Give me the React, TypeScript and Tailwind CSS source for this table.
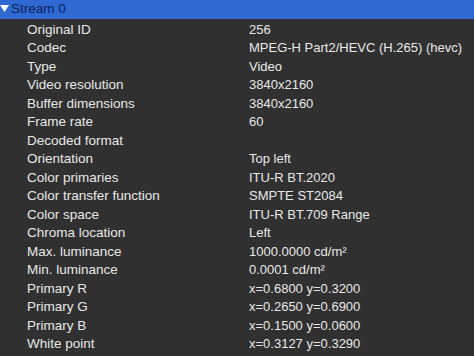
const rows: [string, string][] = [
  ['Original ID', '256'],
  ['Codec', 'MPEG-H Part2/HEVC (H.265) (hevc)'],
  ['Type', 'Video'],
  ['Video resolution', '3840x2160'],
  ['Buffer dimensions', '3840x2160'],
  ['Frame rate', '60'],
  ['Decoded format', ''],
  ['Orientation', 'Top left'],
  ['Color primaries', 'ITU-R BT.2020'],
  ['Color transfer function', 'SMPTE ST2084'],
  ['Color space', 'ITU-R BT.709 Range'],
  ['Chroma location', 'Left'],
  ['Max. luminance', '1000.0000 cd/m²'],
  ['Min. luminance', '0.0001 cd/m²'],
  ['Primary R', 'x=0.6800 y=0.3200'],
  ['Primary G', 'x=0.2650 y=0.6900'],
  ['Primary B', 'x=0.1500 y=0.0600'],
  ['White point', 'x=0.3127 y=0.3290'],
];

export default function App() {
  return (
    <div className="w-[474px] h-[356px] overflow-hidden bg-[#303030] font-['Liberation_Sans',Arial,sans-serif] text-[13.5px] text-[#e8e8e8]">
      {/* stream header */}
      <div className="flex items-center h-[18.5px] bg-[#2e6ad2] text-[#0c1f5e] text-[13.5px]">
        <svg width="10" height="8" viewBox="0 0 10 8" className="mr-[1px]">
          <polygon points="0,0 9,0 4.5,7" fill="#ffffff" />
        </svg>
        <span>Stream 0</span>
      </div>
      <div className="pt-[1.5px]">
        {rows.map(([k, v]) => (
          <div key={k} className="flex items-center h-[18.5px] leading-none">
            <span className="w-[249px] pl-[27px] shrink-0">{k}</span>
            <span className="text-[13px]">{v}</span>
          </div>
        ))}
      </div>
    </div>
  );
}
